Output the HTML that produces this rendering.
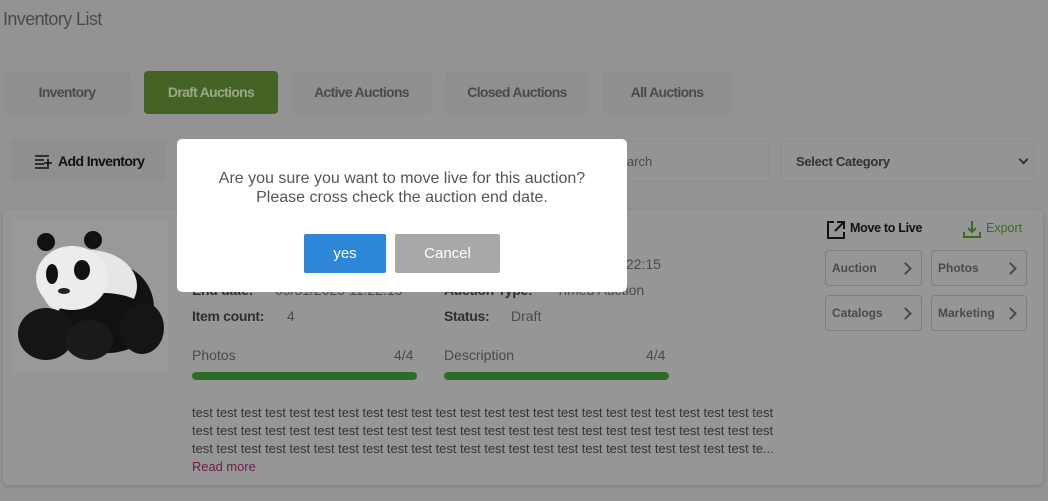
<!DOCTYPE html>
<html><head><style>
*{box-sizing:border-box;margin:0;padding:0}
body{width:1048px;height:501px;overflow:hidden;background:#939393;font-family:"Liberation Sans",sans-serif;position:relative;color:#3a3a3a}
.title{position:absolute;left:3px;top:9px;font-size:18px;color:#4a4a4a;letter-spacing:-0.6px}
.tab{position:absolute;top:71px;height:43px;background:#8f8f8f;border-radius:4px;font-size:14px;font-weight:bold;color:#4a4a4a;text-align:center;line-height:43px;letter-spacing:-0.7px}
.tab.on{background:#456325;color:#9aa88a}
.box{position:absolute;background:#949494;border:1px solid #8c8c8c;border-radius:3px}
.card{position:absolute;left:3px;top:210px;width:1040px;height:275px;background:#969696;border-radius:6px;box-shadow:0 1px 4px rgba(0,0,0,.15)}
.lbl{position:absolute;font-size:14px;font-weight:bold;color:#2f2f2f;letter-spacing:-0.3px}
.val{position:absolute;font-size:14px;color:#4a4a4a}
.bar{position:absolute;height:8px;background:#2f6b2a;border-radius:4px}
.btn{position:absolute;width:97px;height:36px;border:1px solid #7e7e7e;border-radius:4px;font-size:12px;font-weight:bold;color:#4a4a4a;line-height:34px;padding-left:6px}
.btn:after{content:"";position:absolute;right:11px;top:13px;width:7px;height:7px;border-right:2px solid #4a4a4a;border-top:2px solid #4a4a4a;transform:rotate(45deg)}
.desc{position:absolute;left:192px;top:404px;width:600px;font-size:12.9px;line-height:18px;color:#333;white-space:nowrap}
.modal{position:absolute;left:177px;top:139px;width:450px;height:153px;background:#fff;border-radius:5px;text-align:center;font-size:16px;color:#555}
</style></head><body>
<div class="title">Inventory List</div>
<div class="tab" style="left:3px;width:128px">Inventory</div>
<div class="tab on" style="left:144px;width:134px">Draft Auctions</div>
<div class="tab" style="left:291px;width:141px">Active Auctions</div>
<div class="tab" style="left:445px;width:144px">Closed Auctions</div>
<div class="tab" style="left:602px;width:130px">All Auctions</div>
<div class="box" style="left:11px;top:140px;width:155px;height:42px;background:#8f8f8f;border:none;font-size:14px;font-weight:bold;color:#111;line-height:42px;padding-left:47px;letter-spacing:-0.6px">Add Inventory
<svg style="position:absolute;left:24px;top:14px" width="18" height="16" viewBox="0 0 18 16" fill="none" stroke="#111" stroke-width="1.6"><path d="M0 2h14M0 6h9M0 10h9M0 14h14M13 5v8M9 9h8"/></svg></div>
<div class="box" style="left:600px;top:141px;width:169px;height:41px;font-size:13px;color:#4a4a4a;line-height:40px;padding-left:10px">Search</div>
<div class="box" style="left:781px;top:141px;width:253px;height:41px;font-size:13px;font-weight:bold;color:#333;line-height:40px;padding-left:14px;letter-spacing:-0.3px">Select Category<span style="position:absolute;right:6px;top:14px;width:7px;height:7px;border-right:2px solid #333;border-bottom:2px solid #333;transform:rotate(45deg)"></span></div>
<div class="card"></div>
<div style="position:absolute;left:12px;top:219px;width:156px;height:155px;background:#999"></div>
<svg style="position:absolute;left:14px;top:228px" width="152" height="136" viewBox="0 0 152 136">
<ellipse cx="95" cy="80" rx="45" ry="45" fill="#121212"/>
<ellipse cx="75" cy="58" rx="48" ry="36" fill="#e6e6e6"/>
<ellipse cx="90" cy="95" rx="50" ry="30" fill="#111"/>
<ellipse cx="32" cy="106" rx="28" ry="26" fill="#151515"/>
<ellipse cx="128" cy="100" rx="22" ry="26" fill="#151515"/>
<ellipse cx="75" cy="112" rx="24" ry="20" fill="#1a1a1a"/>
<ellipse cx="58" cy="50" rx="36" ry="32" fill="#ececec"/>
<circle cx="32" cy="14" r="9" fill="#111"/><circle cx="79" cy="12" r="9" fill="#111"/>
<ellipse cx="38" cy="46" rx="6" ry="10" fill="#111"/><ellipse cx="68" cy="42" rx="8" ry="10" fill="#111"/>
<ellipse cx="50" cy="63" rx="6" ry="3" fill="#222"/>
</svg>
<div class="lbl" style="left:192px;top:282px">End date:</div><div class="val" style="left:275px;top:282px">05/31/2025 11:22:15</div>
<div class="lbl" style="left:192px;top:308px">Item count:</div><div class="val" style="left:287px;top:308px">4</div>
<div class="lbl" style="left:444px;top:282px">Auction Type:</div><div class="val" style="left:556px;top:282px">Timed Auction</div>
<div class="val" style="left:622px;top:256px">:22:15</div>
<div class="lbl" style="left:444px;top:308px">Status:</div><div class="val" style="left:511px;top:308px">Draft</div>
<div class="val" style="left:192px;top:347px">Photos</div><div class="val" style="left:394px;top:347px">4/4</div>
<div class="val" style="left:444px;top:347px">Description</div><div class="val" style="left:646px;top:347px">4/4</div>
<div class="bar" style="left:192px;top:372px;width:225px"></div>
<div class="bar" style="left:444px;top:372px;width:225px"></div>
<div class="desc">test test test test test test test test test test test test test test test test test test test test test test test test<br>test test test test test test test test test test test test test test test test test test test test test test test test<br>test test test test test test test test test test test test test test test test test test test test test test test te...<br><span style="color:#6d1a45">Read more</span></div>
<svg style="position:absolute;left:826px;top:220px" width="20" height="20" viewBox="0 0 20 20" fill="none" stroke="#111" stroke-width="2"><path d="M8 2H2v16h16v-6M11 2h7v7M18 2l-9 9"/></svg>
<div style="position:absolute;left:850px;top:221px;font-size:12.5px;font-weight:bold;color:#111;letter-spacing:-0.3px">Move to Live</div>
<svg style="position:absolute;left:963px;top:220px" width="18" height="18" viewBox="0 0 18 18" fill="none" stroke="#3e6b1f" stroke-width="2"><path d="M9 1v11M5 8l4 4 4-4M1 12v5h16v-5"/></svg>
<div style="position:absolute;left:986px;top:221px;font-size:12.5px;color:#3e6b1f">Export</div>
<div class="btn" style="left:825px;top:250px">Auction</div>
<div class="btn" style="left:931px;top:250px;width:96px">Photos</div>
<div class="btn" style="left:825px;top:295px">Catalogs</div>
<div class="btn" style="left:931px;top:295px;width:96px">Marketing</div>
<div class="modal">
<div style="position:absolute;left:0;right:0;top:30px;line-height:19px">Are you sure you want to move live for this auction?<br>Please cross check the auction end date.</div>
<div style="position:absolute;left:127px;top:95px;width:82px;height:39px;background:#2e86d8;border-radius:2px;color:#fff;font-size:15px;line-height:39px">yes</div>
<div style="position:absolute;left:218px;top:95px;width:105px;height:39px;background:#a8a8a8;border-radius:2px;color:#fff;font-size:15px;line-height:39px">Cancel</div>
</div>
</body></html>
